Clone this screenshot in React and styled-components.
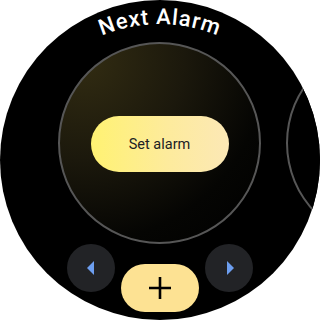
import React from "react";
import styled, { createGlobalStyle } from "styled-components";

// round watch face: curved title, paged alarm circles, bottom controls
const Global = createGlobalStyle`
  html, body {
    margin: 0;
    padding: 0;
    background: #ffffff;
  }
`;

const App = () => {
  return (
    <>
      <Global />
      <Watch>
        <Title viewBox="0 0 320 42" width="320" height="42">
          <defs>
            <path id="arc" d="M 10 174 A 150 150 0 0 1 310 174" />
          </defs>
          <text>
            <textPath href="#arc" startOffset="50%">
              Next Alarm
            </textPath>
          </text>
        </Title>
        <Pager>
          <Page $active>
            <SetAlarm>Set alarm</SetAlarm>
          </Page>
          <Page />
        </Pager>
        <Controls>
          <RoundButton aria-label="previous">
            <Arrow $dir="left" />
          </RoundButton>
          <AddButton aria-label="add alarm">
            <svg width="22" height="22" viewBox="0 0 22 22">
              <path d="M11 0v22M0 11h22" stroke="#000" strokeWidth="2.6" />
            </svg>
          </AddButton>
          <RoundButton aria-label="next">
            <Arrow $dir="right" />
          </RoundButton>
        </Controls>
      </Watch>
    </>
  );
};

const Watch = styled.div`
  width: 320px;
  height: 320px;
  border-radius: 50%;
  background: #000;
  overflow: hidden;
  display: flex;
  flex-direction: column;
`;

const Title = styled.svg`
  display: block;
  flex-shrink: 0;
  text {
    fill: #fff;
    font-family: Roboto, "Noto Sans", sans-serif;
    font-weight: 500;
    font-size: 22px;
    letter-spacing: 0.9px;
    text-anchor: middle;
  }
`;

const Pager = styled.div`
  display: flex;
  gap: 25px;
  padding-left: 58px;
  height: 202px;
  flex-shrink: 0;
`;

const Page = styled.div`
  width: 203px;
  height: 202px;
  flex-shrink: 0;
  box-sizing: border-box;
  border-radius: 50%;
  border: 2px solid #565656;
  background: ${(p) =>
    p.$active
      ? "radial-gradient(circle at 12% 8%, #322c12 0%, #1b180c 40%, #050503 72%, #000 100%)"
      : "#000"};
  display: flex;
  align-items: center;
  justify-content: center;
`;

const SetAlarm = styled.button`
  width: 138px;
  height: 56px;
  border: none;
  border-radius: 28px;
  background: linear-gradient(90deg, #fff272 0%, #fdeb9c 55%, #fce8b6 100%);
  color: #202124;
  font-family: Roboto, "Noto Sans", sans-serif;
  font-size: 14.5px;
  padding: 0;
  margin-top: 2px;
`;

const Controls = styled.div`
  display: flex;
  justify-content: center;
  align-items: flex-start;
  gap: 6px;
`;

const RoundButton = styled.button`
  width: 48px;
  height: 48px;
  border-radius: 50%;
  border: none;
  background: #222326;
  padding: 0;
  display: flex;
  align-items: center;
  justify-content: center;
`;

const Arrow = styled.span`
  width: 0;
  height: 0;
  border-top: 7px solid transparent;
  border-bottom: 7px solid transparent;
  ${(p) =>
    p.$dir === "left"
      ? "border-right: 7px solid #6d9eef; margin-left: -2px;"
      : "border-left: 7px solid #6d9eef; margin-left: 2px;"}
`;

const AddButton = styled.button`
  width: 78px;
  height: 48px;
  margin-top: 20px;
  border-radius: 24px;
  border: none;
  background: #fde293;
  padding: 0;
  display: flex;
  align-items: center;
  justify-content: center;
`;

export default App;
